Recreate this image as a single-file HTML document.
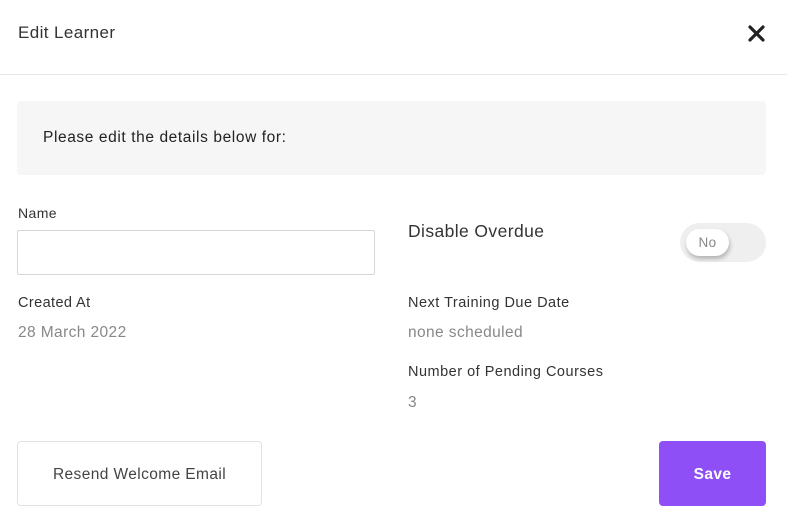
<!DOCTYPE html>
<html><head><style>
*{margin:0;padding:0;box-sizing:border-box}
body{width:787px;height:519px;background:#fff;font-family:"Liberation Sans",sans-serif;position:relative;overflow:hidden;color:#333;letter-spacing:0.4px}
.a{position:absolute;white-space:nowrap}
</style></head><body>
<div class="a" style="left:18px;top:23px;font-size:17px;color:#333">Edit Learner</div>
<svg class="a" style="left:748px;top:25px" width="17" height="17" viewBox="0 0 17 17"><path d="M2 2L15 15M15 2L2 15" stroke="#222" stroke-width="3.2" stroke-linecap="round"/></svg>
<div class="a" style="left:0;top:74px;width:787px;height:1px;background:#e8e8e8"></div>
<div class="a" style="left:17px;top:101px;width:749px;height:74px;background:#f6f6f6;border-radius:4px"></div>
<div class="a" style="left:43px;top:129px;font-size:15.5px;color:#222;letter-spacing:0.6px">Please edit the details below for:</div>
<div class="a" style="left:18px;top:205px;font-size:14px;color:#333">Name</div>
<div class="a" style="left:17px;top:230px;width:358px;height:45px;border:1px solid #d6d6d6;border-radius:2px"></div>
<div class="a" style="left:408px;top:221px;font-size:17.5px;color:#333">Disable Overdue</div>
<div class="a" style="left:680px;top:223px;width:86px;height:39px;background:#efefef;border-radius:20px"></div>
<div class="a" style="left:686px;top:229px;width:43px;height:27px;background:#fff;border-radius:14px;box-shadow:1px 3px 4px rgba(0,0,0,.25);font-size:13.5px;color:#888;text-align:center;line-height:27px">No</div>
<div class="a" style="left:18px;top:295px;font-size:14.5px;color:#333">Created At</div>
<div class="a" style="left:18px;top:324px;font-size:15.5px;color:#888">28 March 2022</div>
<div class="a" style="left:408px;top:295px;font-size:14.5px;color:#333;letter-spacing:0.5px">Next Training Due Date</div>
<div class="a" style="left:408px;top:324px;font-size:15.5px;color:#888">none scheduled</div>
<div class="a" style="left:408px;top:364px;font-size:14.5px;color:#333;letter-spacing:0.5px">Number of Pending Courses</div>
<div class="a" style="left:408px;top:394px;font-size:15.5px;color:#888">3</div>
<div class="a" style="left:17px;top:441px;width:245px;height:65px;border:1px solid #e2e2e2;border-radius:4px;font-size:15.5px;color:#444;text-align:center;line-height:65px">Resend Welcome Email</div>
<div class="a" style="left:659px;top:441px;width:107px;height:65px;background:#8e4ff7;border-radius:4px;font-size:15.5px;color:#fff;text-align:center;line-height:67px;font-weight:bold">Save</div>
</body></html>
